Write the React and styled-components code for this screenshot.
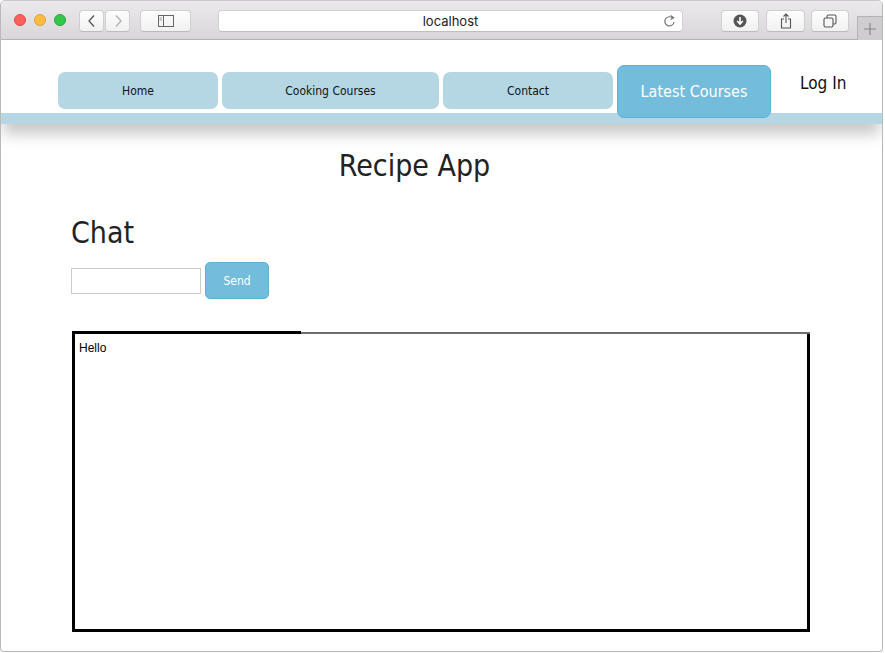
import React, { useState } from "react";
import styled, { createGlobalStyle } from "styled-components";

const GlobalStyle = createGlobalStyle`
	html, body {
		margin: 0;
		padding: 0;
		background: #ffffff;
	}
	* {
		box-sizing: border-box;
	}
`;

const Window = styled.div`
	width: 883px;
	height: 652px;
	border: 1px solid #b9b9b9;
	border-top-color: #c8c8c8;
	border-radius: 5px 5px 4px 4px;
	overflow: hidden;
	display: flex;
	flex-flow: column;
	background: #fff;
`;

const TitleBar = styled.div`
	height: 39px;
	flex-shrink: 0;
	display: flex;
	align-items: flex-start;
	background: linear-gradient(#ebe9eb, #d8d6d8);
	border-bottom: 1px solid #b4b4b4;
	padding: 9px 0 0 13px;
	font-family: "Inter", "Liberation Sans", sans-serif;
`;

const Lights = styled.div`
	display: flex;
	gap: 8px;
	margin-top: 4px;
`;

const Light = styled.span`
	width: 12px;
	height: 12px;
	border-radius: 50%;
	background: ${(props) => props.color};
	border: 1px solid ${(props) => props.edge};
`;

const ToolGroup = styled.div`
	display: flex;
	gap: 1px;
	margin-left: ${(props) => props.offset}px;
`;

const ToolButton = styled.div`
	width: ${(props) => props.w || 25}px;
	height: 22px;
	display: flex;
	align-items: center;
	justify-content: center;
	background: linear-gradient(#fdfdfd, #f1f1f1);
	border: 1px solid #d0ced0;
	border-bottom-color: #bdbbbd;
	border-radius: 4px;
`;

const UrlBar = styled.div`
	width: 465px;
	height: 22px;
	margin-left: 27px;
	display: flex;
	align-items: center;
	justify-content: center;
	position: relative;
	background: #fff;
	border: 1px solid #d2d0d2;
	border-bottom-color: #c0bec0;
	border-radius: 4px;
	font-size: 13px;
	color: #222;
`;

const Reload = styled.span`
	position: absolute;
	right: 6px;
	top: 3px;
	display: flex;
`;

const NewTab = styled.div`
	width: 25px;
	height: 24px;
	margin-left: auto;
	margin-top: 6px;
	display: flex;
	align-items: center;
	justify-content: center;
	background: #cfcdcf;
	border-left: 1px solid #b4b4b4;
	border-top: 1px solid #b4b4b4;
`;

const Page = styled.div`
	flex: 1;
	display: flex;
	flex-flow: column;
	font-family: "DejaVu Sans Condensed", "DejaVu Sans", sans-serif;
	color: #222;
`;

const Nav = styled.nav`
	height: 84px;
	display: flex;
	align-items: flex-end;
	padding-left: 57px;
	border-bottom: 11px solid #b5d7e3;
	box-shadow: 0 12px 14px -2px rgba(0, 0, 0, 0.22);
	position: relative;
	z-index: 1;
`;

const NavButton = styled.div`
	width: ${(props) => props.w}px;
	height: 37px;
	margin-right: 4px;
	margin-bottom: 4px;
	display: flex;
	align-items: center;
	justify-content: center;
	background: #b5d7e3;
	border-radius: 7px;
	font-size: 12px;
	color: #111;
`;

const LatestButton = styled.div`
	width: 154px;
	height: 53px;
	margin-bottom: -5px;
	display: flex;
	align-items: center;
	justify-content: center;
	background: #74bcdb;
	border: 1px solid #5eb0d4;
	border-radius: 7px;
	font-size: 16px;
	color: #fff;
`;

const LogIn = styled.div`
	align-self: flex-start;
	margin: 33px 0 0 29px;
	font-size: 17px;
	color: #111;
`;

const Main = styled.main`
	display: flex;
	flex-flow: column;
	padding-left: 70px;
`;

const Title = styled.h1`
	margin: 24px 0 0;
	padding-right: 124px;
	text-align: center;
	font-size: 30px;
	line-height: 36px;
	font-weight: normal;
`;

const Heading = styled.h2`
	margin: 31px 0 0;
	font-size: 30px;
	line-height: 36px;
	font-weight: normal;
`;

const Form = styled.form`
	display: flex;
	align-items: center;
	gap: 4px;
	margin-top: 11px;
`;

const Input = styled.input`
	width: 130px;
	height: 26px;
	border: 1px solid #cccccc;
	padding: 2px 4px;
	font-family: inherit;
	outline: none;
`;

const SendButton = styled.button`
	width: 64px;
	height: 37px;
	background: #74bcdb;
	border: 1px solid #5eb0d4;
	border-radius: 5px;
	color: #fff;
	font-family: inherit;
	font-size: 12px;
	cursor: pointer;
`;

const MessageBox = styled.div`
	width: 738px;
	height: 301px;
	margin: 32px 0 0 1px;
	padding: 7px 4px;
	border: 3px solid #000;
	position: relative;
	font-family: "Liberation Sans", Arial, sans-serif;
	font-size: 12px;
	color: #000;

	&::after {
		content: "";
		position: absolute;
		top: -3px;
		left: 226px;
		right: -3px;
		height: 3px;
		background: linear-gradient(#fff 0 1px, #6e6e6e 1px);
	}
`;

const Message = styled.div`
	line-height: 14px;
`;

const App = () => {
	const [text, setText] = useState("");
	const [messages, setMessages] = useState(["Hello"]);

	const handleSend = (e) => {
		e.preventDefault();
		if (!text.trim()) return;
		setMessages([...messages, text]);
		setText("");
	};

	return (
		<>
			<GlobalStyle />
			<Window>
				<TitleBar>
					<Lights>
						<Light color="#fc605c" edge="#de4a46" />
						<Light color="#fdbc40" edge="#dea236" />
						<Light color="#34c84a" edge="#2aa63b" />
					</Lights>
					<ToolGroup offset={13}>
						<ToolButton>
							<svg width="10" height="14" viewBox="0 0 10 14">
								<path d="M7 1.5 L2 7 L7 12.5" fill="none" stroke="#555" strokeWidth="1.3" />
							</svg>
						</ToolButton>
						<ToolButton>
							<svg width="10" height="14" viewBox="0 0 10 14">
								<path d="M3 1.5 L8 7 L3 12.5" fill="none" stroke="#b0b0b0" strokeWidth="1.3" />
							</svg>
						</ToolButton>
					</ToolGroup>
					<ToolGroup offset={10}>
						<ToolButton w={51}>
							<svg width="16" height="12" viewBox="0 0 16 12">
								<rect x="0.5" y="0.5" width="15" height="11" fill="none" stroke="#666" />
								<line x1="5.5" y1="0.5" x2="5.5" y2="11.5" stroke="#666" />
								<line x1="1.5" y1="3" x2="4" y2="3" stroke="#999" />
								<line x1="1.5" y1="5" x2="4" y2="5" stroke="#999" />
							</svg>
						</ToolButton>
					</ToolGroup>
					<UrlBar>
						localhost
						<Reload>
							<svg width="13" height="14" viewBox="0 0 13 14">
								<path d="M9.8 4.2 A4.6 4.6 0 1 0 11 8" fill="none" stroke="#777" strokeWidth="1.2" />
								<path d="M7.6 1.6 L10.6 3.8 L7.6 5.6" fill="none" stroke="#777" strokeWidth="1.2" />
							</svg>
						</Reload>
					</UrlBar>
					<ToolGroup offset={38}>
						<ToolButton w={38}>
							<svg width="14" height="14" viewBox="0 0 14 14">
								<circle cx="7" cy="7" r="6.5" fill="#555" />
								<path d="M7 3 V9.5 M4.2 7 L7 10 L9.8 7" fill="none" stroke="#fff" strokeWidth="1.6" />
							</svg>
						</ToolButton>
					</ToolGroup>
					<ToolGroup offset={7}>
						<ToolButton w={39}>
							<svg width="12" height="16" viewBox="0 0 12 16">
								<path d="M4 6 H1.5 V15 H10.5 V6 H8" fill="none" stroke="#555" strokeWidth="1.1" />
								<path d="M6 1 V10 M3.5 3.5 L6 1 L8.5 3.5" fill="none" stroke="#555" strokeWidth="1.1" />
							</svg>
						</ToolButton>
					</ToolGroup>
					<ToolGroup offset={6}>
						<ToolButton w={38}>
							<svg width="14" height="14" viewBox="0 0 14 14">
								<rect x="4" y="1" width="9" height="9" rx="1.5" fill="none" stroke="#555" strokeWidth="1.1" />
								<rect x="1" y="4" width="9" height="9" rx="1.5" fill="#f6f6f6" stroke="#555" strokeWidth="1.1" />
							</svg>
						</ToolButton>
					</ToolGroup>
					<NewTab>
						<svg width="14" height="14" viewBox="0 0 14 14">
							<path d="M7 1 V13 M1 7 H13" stroke="#888" strokeWidth="1.2" />
						</svg>
					</NewTab>
				</TitleBar>
				<Page>
					<Nav>
						<NavButton w={160}>Home</NavButton>
						<NavButton w={217}>Cooking Courses</NavButton>
						<NavButton w={170}>Contact</NavButton>
						<LatestButton>Latest Courses</LatestButton>
						<LogIn>Log In</LogIn>
					</Nav>
					<Main>
						<Title>Recipe App</Title>
						<Heading>Chat</Heading>
						<Form onSubmit={handleSend}>
							<Input value={text} onChange={(e) => setText(e.target.value)} />
							<SendButton type="submit">Send</SendButton>
						</Form>
						<MessageBox>
							{messages.map((m, i) => (
								<Message key={i}>{m}</Message>
							))}
						</MessageBox>
					</Main>
				</Page>
			</Window>
		</>
	);
};

export default App;
